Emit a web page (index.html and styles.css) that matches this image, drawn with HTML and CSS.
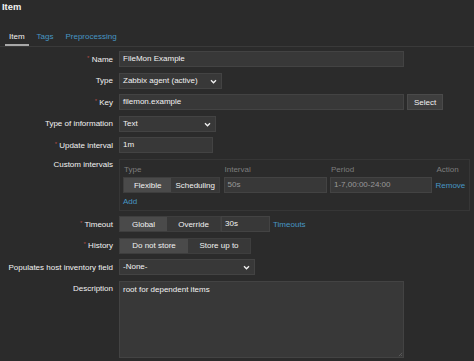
FILE: index.html
```html
<!DOCTYPE html>
<html lang="en">
<head>
    <meta charset="UTF-8">
    <meta name="viewport" content="width=device-width, initial-scale=1.0">
    <title>Item</title>
    <link rel="stylesheet" href="styles.css">
</head>
<body>

    <div class="page-title">Item</div>

    <div class="tabs">
        <a class="tab active">Item</a>
        <a class="tab">Tags</a>
        <a class="tab">Preprocessing</a>
    </div>

    <div class="form">
        <label class="label"><span class="req">*</span> Name</label>
        <div class="field"><div class="input wide">FileMon Example</div></div>

        <label class="label">Type</label>
        <div class="field">
            <div class="select" style="width: 103px">Zabbix agent (active)
                <svg class="chev" viewBox="0 0 8 6"><path d="M1 1.5 L4 4.5 L7 1.5" /></svg>
            </div>
        </div>

        <label class="label"><span class="req">*</span> Key</label>
        <div class="field">
            <div class="input wide">filemon.example</div>
            <button class="btn">Select</button>
        </div>

        <label class="label">Type of information</label>
        <div class="field">
            <div class="select" style="width: 97px">Text
                <svg class="chev" viewBox="0 0 8 6"><path d="M1 1.5 L4 4.5 L7 1.5" /></svg>
            </div>
        </div>

        <label class="label"><span class="req">*</span> Update interval</label>
        <div class="field"><div class="input" style="width: 94px">1m</div></div>

        <label class="label label-top">Custom intervals</label>
        <div class="intervals">
            <div class="th">Type</div>
            <div class="th">Interval</div>
            <div class="th">Period</div>
            <div class="th">Action</div>

            <div class="segmented">
                <span class="seg on">Flexible</span>
                <span class="seg">Scheduling</span>
            </div>
            <div class="input dim">50s</div>
            <div class="input dim">1-7,00:00-24:00</div>
            <a class="link">Remove</a>

            <a class="link add">Add</a>
        </div>

        <label class="label"><span class="req">*</span> Timeout</label>
        <div class="field">
            <div class="segmented">
                <span class="seg on" style="width: 39px">Global</span>
                <span class="seg" style="width: 45px">Override</span>
            </div>
            <div class="input" style="width: 49px">30s</div>
            <a class="link gap">Timeouts</a>
        </div>

        <label class="label"><span class="req">*</span> History</label>
        <div class="field">
            <div class="segmented">
                <span class="seg on" style="width: 60px">Do not store</span>
                <span class="seg" style="width: 54px">Store up to</span>
            </div>
        </div>

        <label class="label">Populates host inventory field</label>
        <div class="field">
            <div class="select" style="width: 136px">-None-
                <svg class="chev" viewBox="0 0 8 6"><path d="M1 1.5 L4 4.5 L7 1.5" /></svg>
            </div>
        </div>

        <label class="label label-desc">Description</label>
        <div class="field tall">
            <div class="textarea">root for dependent items
                <svg class="grip" viewBox="0 0 6 6"><path d="M5 1 L1 5 M5 3.5 L3.5 5" /></svg>
            </div>
        </div>
    </div>

</body>
</html>
```
FILE: styles.css
```css
body {
    margin: 0;
    background: #2b2b2b;
    color: #f2f2f2;
    font-family: "Liberation Sans", Arial, sans-serif;
    font-size: 8px;
    width: 474px;
    height: 361px;
    overflow: hidden;
}

.page-title {
    font-weight: bold;
    font-size: 9.4px;
    padding: 1px 0 0 2px;
    height: 24px;
    box-sizing: border-box;
}

.tabs {
    display: flex;
    gap: 4px;
    height: 22px;
    padding-left: 5px;
    border-bottom: 1px solid #3a3a3a;
}

.tab {
    display: flex;
    align-items: center;
    padding: 4px 4px 0;
    color: #4796c4;
    border-bottom: 2px solid transparent;
}

.tab.active {
    color: #f2f2f2;
    border-bottom-color: #a8a8a8;
}

.form {
    display: grid;
    grid-template-columns: 113px 1fr;
    column-gap: 6px;
    row-gap: 5.5px;
    padding-top: 4px;
}

.label {
    text-align: right;
    align-self: center;
    white-space: nowrap;
}

.label-top {
    align-self: start;
    line-height: 12px;
}

.label-desc {
    align-self: start;
    line-height: 12px;
    padding-top: 2px;
}

.req {
    color: #b24b45;
    font-size: 6px;
    vertical-align: 2px;
}

.field {
    display: flex;
    align-items: center;
    height: 16px;
}

.field.tall {
    height: auto;
    align-items: flex-start;
}

.input, .select {
    box-sizing: border-box;
    height: 16px;
    line-height: 14px;
    background: #383838;
    border: 1px solid #434343;
    padding: 0 3px;
    white-space: nowrap;
}

.input.wide {
    width: 285px;
}

.input.dim {
    color: #9a9a9a;
}

.select {
    position: relative;
}

.chev {
    position: absolute;
    right: 4px;
    top: 5px;
    width: 7px;
    height: 5px;
    fill: none;
    stroke: #f2f2f2;
    stroke-width: 1.6;
}

.btn {
    box-sizing: border-box;
    margin-left: 3px;
    height: 16px;
    width: 36px;
    padding: 0;
    background: #3e3e3e;
    border: 1px solid #4a4a4a;
    color: #f2f2f2;
    font-family: inherit;
    font-size: 8px;
}

.link {
    color: #4796c4;
}

.link.gap {
    margin-left: 3px;
}

.intervals {
    box-sizing: border-box;
    width: 351px;
    border: 1px solid #363636;
    padding: 4px 3px 2px;
    display: grid;
    grid-template-columns: 97px 103px 102px auto;
    column-gap: 3.5px;
    row-gap: 2.5px;
    align-items: center;
}

.th {
    color: #7d7d7d;
    line-height: 11px;
    padding-left: 1px;
}

.intervals .add {
    grid-column: 1 / -1;
    line-height: 12px;
}

.segmented {
    display: flex;
    height: 16px;
    box-sizing: border-box;
    border: 1px solid #3e3e3e;
}

.seg {
    display: flex;
    align-items: center;
    justify-content: center;
    background: #383838;
    padding: 0 4px;
}

.seg.on {
    background: #4a4a4a;
}

.intervals .seg.on {
    width: 44px;
}

.intervals .seg {
    flex: 1;
}

.textarea {
    position: relative;
    box-sizing: border-box;
    width: 285px;
    height: 77px;
    background: #383838;
    border: 1px solid #434343;
    padding: 2px 3px;
    line-height: 12px;
}

.grip {
    position: absolute;
    right: 0;
    bottom: 0;
    width: 5px;
    height: 5px;
    stroke: #6a6a6a;
    stroke-width: 0.8;
}
```
